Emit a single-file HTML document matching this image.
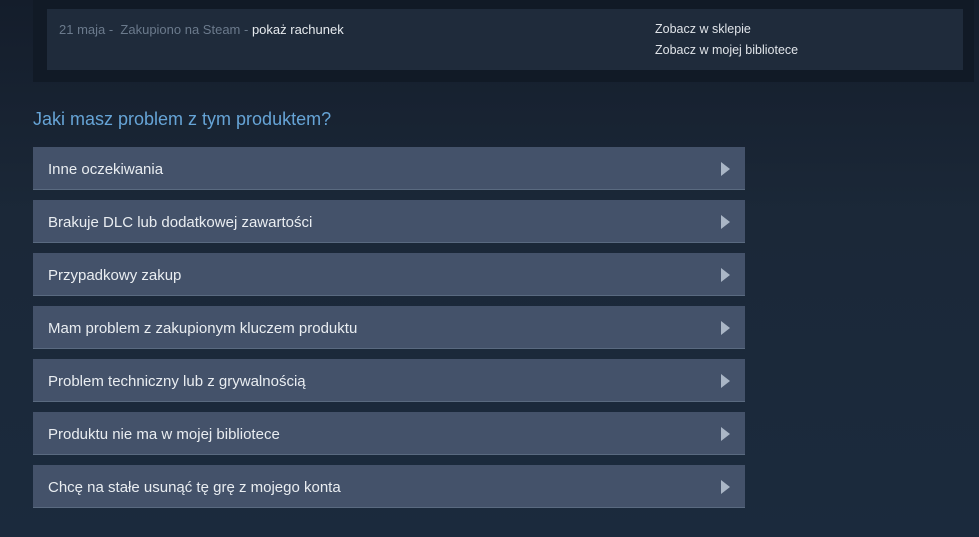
<!DOCTYPE html>
<html><head><meta charset="utf-8"><style>
*{margin:0;padding:0;box-sizing:border-box}
body{width:979px;height:537px;overflow:hidden;background:linear-gradient(180deg,#141d2b 0%,#1b2838 40%,#1b2a3d 100%);font-family:"Liberation Sans",sans-serif;position:relative}
.outer{position:absolute;left:33px;top:0;width:941px;height:82px;background:#111a26}
.inner{position:absolute;left:47px;top:9px;width:916px;height:61px;background:#1f2b3b}
.meta{position:absolute;left:59px;top:22px;font-size:13px;color:#6b7a8c}
.meta b{font-weight:normal;color:#e6eaee}
.links{position:absolute;left:655px;top:19px;font-size:12.5px;color:#dfe3e8;line-height:21px}
h2{position:absolute;left:33px;top:109px;font-weight:normal;font-size:18px;color:#66a4d6}
.row{position:absolute;left:33px;width:712px;height:43px;background:#44526a;border-bottom:1px solid #5a6a80;color:#e9edf1;font-size:15px;line-height:45px;padding-left:15px}
.row:after{content:"";position:absolute;left:688px;top:15px;border-left:9px solid #aab6c6;border-top:7px solid transparent;border-bottom:7px solid transparent}
</style></head><body>
<div class="outer"></div><div class="inner"></div>
<div class="meta">21 maja - &nbsp;Zakupiono na Steam - <b>pokaż rachunek</b></div>
<div class="links">Zobacz w sklepie<br>Zobacz w mojej bibliotece</div>
<h2>Jaki masz problem z tym produktem?</h2>
<div class="row" style="top:147px">Inne oczekiwania</div>
<div class="row" style="top:200px">Brakuje DLC lub dodatkowej zawartości</div>
<div class="row" style="top:253px">Przypadkowy zakup</div>
<div class="row" style="top:306px">Mam problem z zakupionym kluczem produktu</div>
<div class="row" style="top:359px">Problem techniczny lub z grywalnością</div>
<div class="row" style="top:412px">Produktu nie ma w mojej bibliotece</div>
<div class="row" style="top:465px">Chcę na stałe usunąć tę grę z mojego konta</div>
</body></html>
